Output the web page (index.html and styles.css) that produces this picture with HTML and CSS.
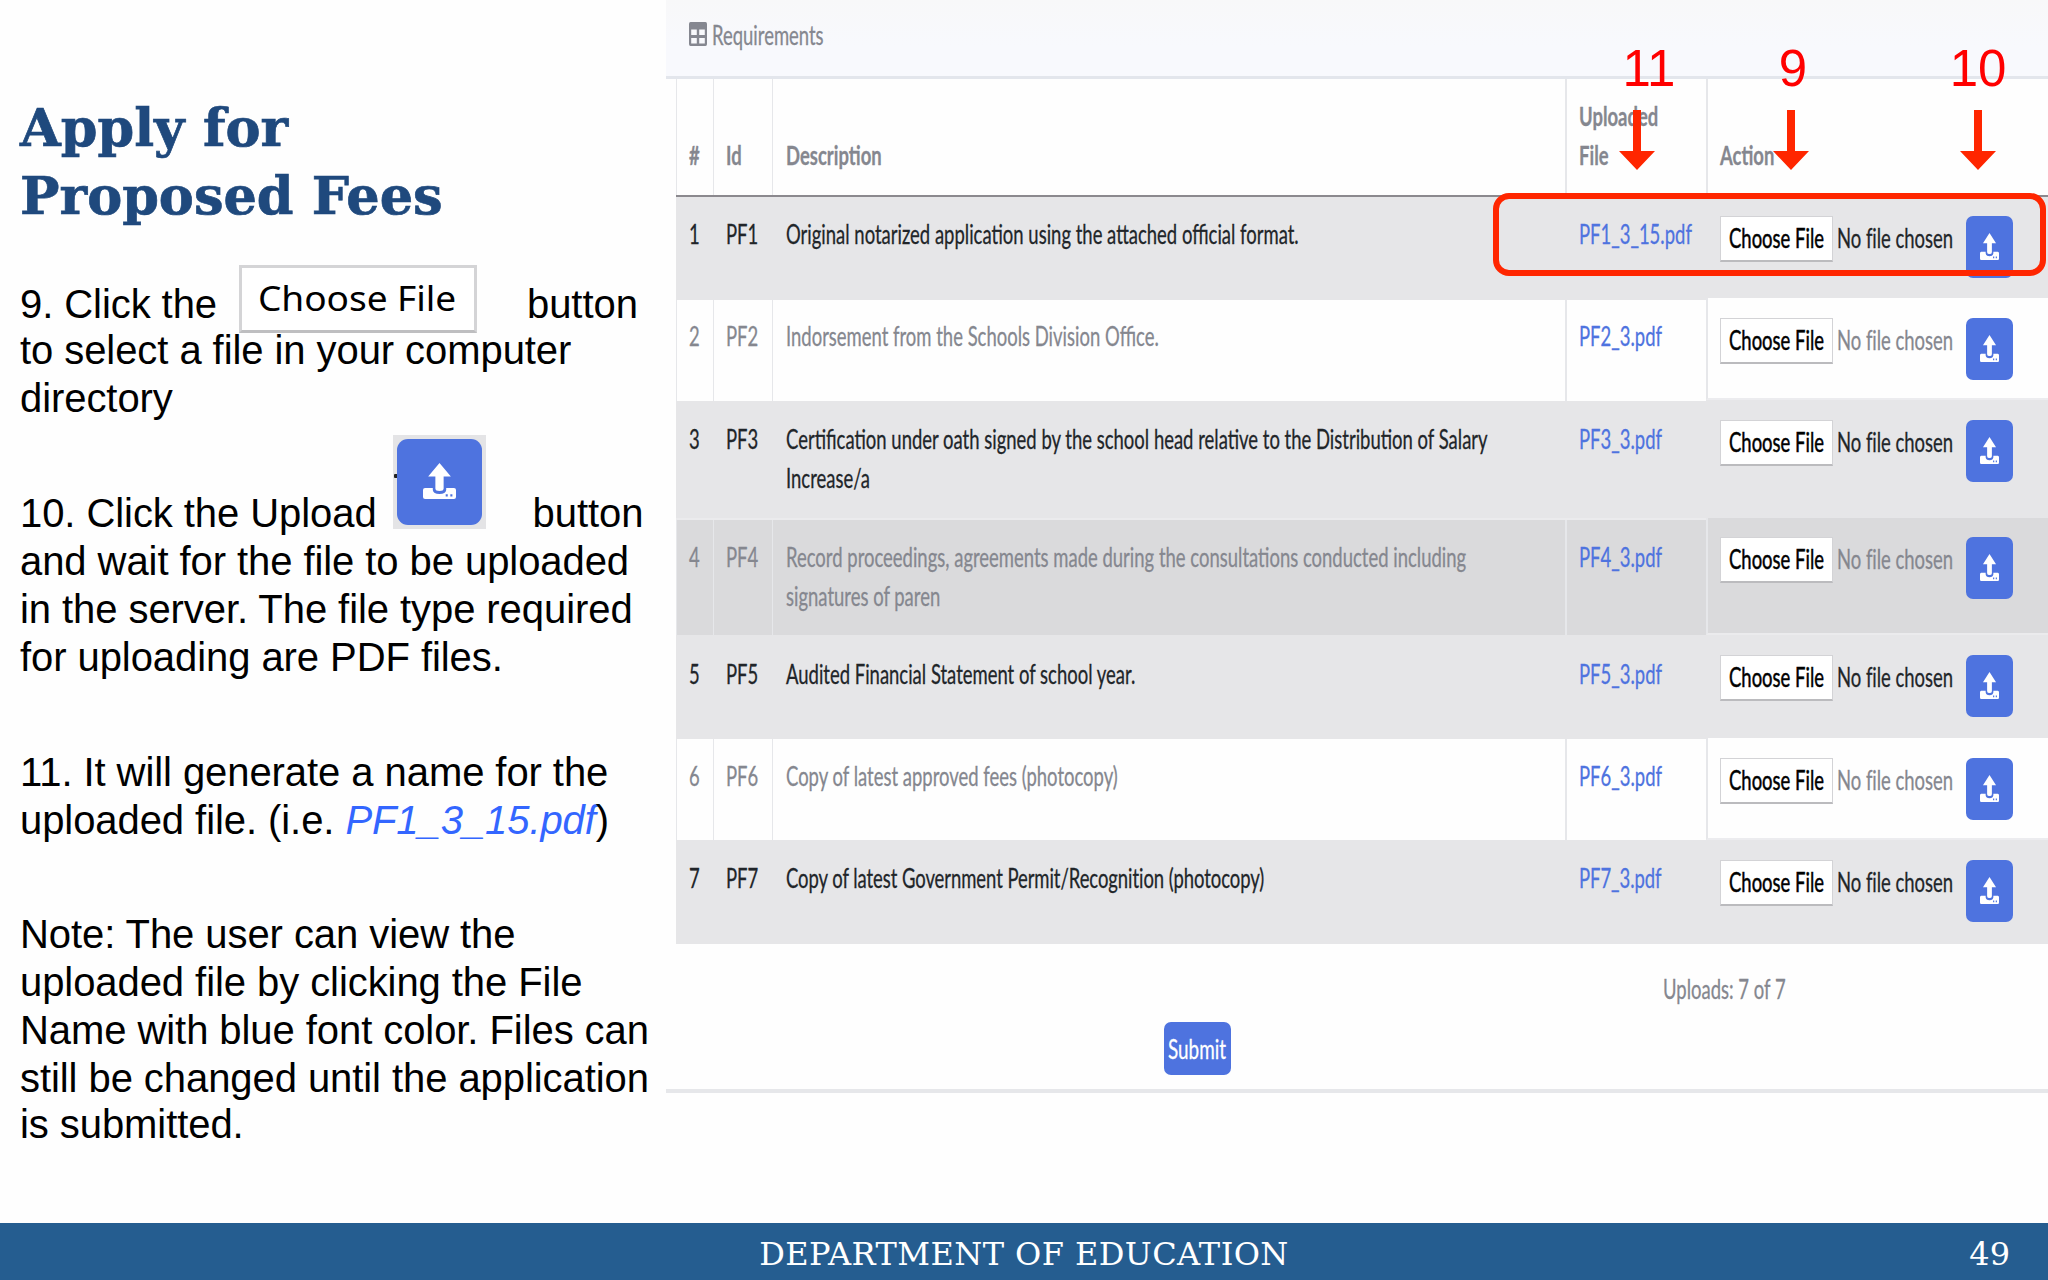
FILE: index.html
```html
<!DOCTYPE html>
<html lang="en">
<head>
<meta charset="utf-8">
<title>Apply for Proposed Fees</title>
<link rel="stylesheet" href="styles.css">
</head>
<body>
<svg width="0" height="0" class="defs">
  <symbol id="upload" viewBox="0 0 32 36" preserveAspectRatio="none">
    <path fill="#fff" d="M16 0 27 13.5H20V25.5Q20 28 16 28T12 25.5V13.5H5Z"/>
    <path fill="#fff" fill-rule="evenodd" d="M2 25H9.5V27Q10 31 16 31T22.500 27V25H30Q32 25 32 27V34Q32 36 30 36H2Q0 36 0 34V27Q0 25 2 25ZM22 31.300V33.500H24V31.300ZM26.500 31.300V33.500H28.500V31.300Z"/>
  </symbol>
</svg>
<div class="slide">
  <main class="content">
    <section class="guide">
      <h1 class="title">Apply for<br>Proposed Fees</h1>
      <div class="step first">
        <p class="line short">9. Click the<span class="choose-sample"><span>Choose File</span></span>button</p>
        <p class="line">to select a file in your computer</p>
        <p class="line">directory</p>
      </div>
      <div class="step second">
        <p class="line">10. Click the Upload<span class="upload-sample"><span class="tile"><svg><use href="#upload"/></svg></span></span>button</p>
        <p class="line">and wait for the file to be uploaded</p>
        <p class="line">in the server. The file type required</p>
        <p class="line">for uploading are PDF files.</p>
      </div>
      <div class="step third">
        <p class="line">11. It will generate a name for the</p>
        <p class="line">uploaded file. (i.e. <em>PF1_3_15.pdf</em>)</p>
      </div>
      <div class="step note">
        <p class="line">Note: The user can view the</p>
        <p class="line">uploaded file by clicking the File</p>
        <p class="line">Name with blue font color. Files can</p>
        <p class="line short">still be changed until the application</p>
        <p class="line">is submitted.</p>
      </div>
    </section>

    <section class="panel">
      <header class="panel-head">
        <svg class="table-icon" viewBox="0 0 18 24" preserveAspectRatio="none"><path fill="#858790" fill-rule="evenodd" d="M1.500 0H16.500Q18 0 18 2V22Q18 24 16.500 24H1.500Q0 24 0 22V2Q0 0 1.500 0ZM2.200 7.500V13H7.800V7.500ZM10.200 7.500V13H15.800V7.500ZM2.200 16V21.500H7.800V16ZM10.200 16V21.500H15.800V16Z"/></svg>
        <span class="t">Requirements</span>
      </header>
      <div class="tables">
        <div class="grid">
          <div class="row head"><div><b class="t">#</b></div><div><b class="t">Id</b></div><div><b class="t">Description</b></div><div><b class="t">Uploaded<br>File</b></div></div>
          <div class="row odd r1"><div><span class="t">1</span></div><div><span class="t">PF1</span></div><div><span class="t">Original notarized application using the attached official format.</span></div><div><a class="t">PF1_3_15.pdf</a></div></div>
          <div class="row r2"><div><span class="t">2</span></div><div><span class="t">PF2</span></div><div><span class="t">Indorsement from the Schools Division Office.</span></div><div><a class="t">PF2_3.pdf</a></div></div>
          <div class="row odd r3"><div><span class="t">3</span></div><div><span class="t">PF3</span></div><div><span class="t">Certification under oath signed by the school head relative to the Distribution of Salary<br>Increase/a</span></div><div><a class="t">PF3_3.pdf</a></div></div>
          <div class="row hover r4"><div><span class="t">4</span></div><div><span class="t">PF4</span></div><div><span class="t">Record proceedings, agreements made during the consultations conducted including<br>signatures of paren</span></div><div><a class="t">PF4_3.pdf</a></div></div>
          <div class="row odd r5"><div><span class="t">5</span></div><div><span class="t">PF5</span></div><div><span class="t">Audited Financial Statement of school year.</span></div><div><a class="t">PF5_3.pdf</a></div></div>
          <div class="row r6"><div><span class="t">6</span></div><div><span class="t">PF6</span></div><div><span class="t">Copy of latest approved fees (photocopy)</span></div><div><a class="t">PF6_3.pdf</a></div></div>
          <div class="row odd r7"><div><span class="t">7</span></div><div><span class="t">PF7</span></div><div><span class="t">Copy of latest Government Permit/Recognition (photocopy)</span></div><div><a class="t">PF7_3.pdf</a></div></div>
        </div>
        <div class="actions">
          <div class="act head"><b class="t">Action</b></div>
          <div class="act odd"><span class="file"><span class="t">Choose File</span></span><span class="none"><span class="t">No file chosen</span></span><span class="btn"><svg><use href="#upload"/></svg></span></div>
          <div class="act line-b"><span class="file"><span class="t">Choose File</span></span><span class="none"><span class="t">No file chosen</span></span><span class="btn"><svg><use href="#upload"/></svg></span></div>
          <div class="act odd low"><span class="file"><span class="t">Choose File</span></span><span class="none"><span class="t">No file chosen</span></span><span class="btn"><svg><use href="#upload"/></svg></span></div>
          <div class="act hover"><span class="file"><span class="t">Choose File</span></span><span class="none"><span class="t">No file chosen</span></span><span class="btn"><svg><use href="#upload"/></svg></span></div>
          <div class="act odd low"><span class="file"><span class="t">Choose File</span></span><span class="none"><span class="t">No file chosen</span></span><span class="btn"><svg><use href="#upload"/></svg></span></div>
          <div class="act line-b"><span class="file"><span class="t">Choose File</span></span><span class="none"><span class="t">No file chosen</span></span><span class="btn"><svg><use href="#upload"/></svg></span></div>
          <div class="act odd low"><span class="file"><span class="t">Choose File</span></span><span class="none"><span class="t">No file chosen</span></span><span class="btn"><svg><use href="#upload"/></svg></span></div>
        </div>
      </div>
      <div class="summary"><span class="t">Uploads: 7 of 7</span></div>
      <div class="submit-row"><span class="submit"><span class="t">Submit</span></span></div>
    </section>
  </main>

  <div class="mark m11"><span>11</span><svg viewBox="0 0 36 60"><path d="M14 0H22V41H36L18 60 0 41H14Z"/></svg></div>
  <div class="mark m9"><span>9</span><svg viewBox="0 0 36 60"><path d="M14 0H22V41H36L18 60 0 41H14Z"/></svg></div>
  <div class="mark m10"><span>10</span><svg viewBox="0 0 36 60"><path d="M14 0H22V41H36L18 60 0 41H14Z"/></svg></div>
  <div class="highlight"></div>

  <footer class="footer"><span></span><span class="dept">DEPARTMENT OF EDUCATION</span><span class="page">49</span></footer>
</div>
</body>
</html>
```
FILE: styles.css
```css
* { box-sizing: border-box; }
body { margin: 0; background: #fefefe; }
.defs { position: absolute; }
p, h1 { margin: 0; }

.slide {
  position: relative;
  width: 2048px;
  height: 1280px;
  overflow: hidden;
  display: flex;
  flex-direction: column;
}
.content { flex: 1; display: flex; align-items: flex-start; }

/* Instructions */
.guide {
  width: 666px;
  padding: 94px 0 0 20px;
  font: 40px/48px "Liberation Sans", Arial, sans-serif;
  letter-spacing: -.07px;
  color: #000;
}
.title {
  font: bold 52.5px/68px "DejaVu Serif", serif;
  letter-spacing: 0;
  -webkit-text-stroke: .7px #1f497d;
  color: #1f497d;
}
.line { height: 48px; white-space: nowrap; display: flex; }
.line.short { height: 46px; }
.line em { color: #3366ff; margin-left: 11px; }
.step.first { padding-top: 50px; }
.step.second { padding-top: 67px; }
.step.third { padding-top: 67px; }
.step.note { padding-top: 66px; }

.choose-sample {
  width: 238px;
  height: 68px;
  margin: -15px 50px 0 22px;
  border: 3px solid #d4d4d6;
  border-bottom-color: #bebec0;
  background: #fff;
  font: 35px/60px "Noto Sans", sans-serif;
  padding-left: 16px;
}
.choose-sample span { display: inline-block; transform: scaleX(1.06); transform-origin: left; }
.upload-sample {
  position: relative;
  width: 93px;
  height: 94px;
  margin: -54px 47px 0 16px;
  padding: 4px;
  background: #e4e4e6;
}
.upload-sample::before {
  content: "";
  position: absolute;
  left: 1px;
  top: 39px;
  width: 4px;
  height: 4px;
  border-radius: 1px;
  background: #222;
}
.tile {
  position: relative;
  display: flex;
  width: 85px;
  height: 86px;
  border-radius: 11px;
  background: #4e73df;
  align-items: center;
  justify-content: center;
}
.tile svg { width: 33px; height: 36px; margin-top: -2px; }

/* Requirements panel */
.panel {
  width: 1382px;
  height: 1093px;
  border-bottom: 4px solid #e6e7ea;
  font: 27px/39px Lato, "Noto Sans", sans-serif;
  color: #85878f;
}
.t {
  display: inline-block;
  white-space: nowrap;
  transform: scaleX(.684);
  transform-origin: left;
  -webkit-text-stroke: .3px;
}
.panel-head {
  display: flex;
  height: 79px;
  padding: 15px 0 0 23px;
  background: linear-gradient(#f8f8f9, #f8f9fd 60%);
  border-bottom: 3px solid #e3e6ec;
}
.table-icon { width: 18px; height: 24px; margin: 7px 5px 0 0; }

.tables { display: flex; padding-left: 10px; }
.grid {
  width: 1030px;
  display: grid;
  grid-template-rows: 118px 103px 101px 119px 115px 104px 101px 104px;
}
.row {
  display: grid;
  grid-template-columns: 37px 59px 793px 141px;
}
.row > div { border-left: 1px solid #e6e7ea; padding: 17px 0 0 12px; overflow: hidden; }
.row > div:nth-child(3) { padding-left: 13px; }
.row > div:last-child { border-left-width: 2px; padding-left: 12px; }
.row.head { border-bottom: 2px solid #8b898e; }
.row.head > div { display: flex; align-items: flex-end; padding-bottom: 21px; }
.row.odd, .act.odd { background: #e6e6e8; color: #212529; }
.row.odd > div { border-color: #e6e6e8; }
.row.hover, .act.hover { background: #dadadc; }
.row.r2 > div { padding-top: 16px; }
.row.r3 > div, .row.r7 > div { padding-top: 18px; }
.row.r5 > div { padding-top: 19px; }
.row.r3 { border-bottom: 2px solid #ebebed; }
.row.r7 .t { letter-spacing: -.08px; }
a.t { color: #4e73df; }

.actions {
  flex: 1;
  display: grid;
  grid-template-rows: 118px 101px 102px 118px 117px 103px 102px 104px;
}
.act {
  display: flex;
  align-items: flex-start;
  padding: 19px 0 0 12px;
  border-left: 2px solid #e6e7ea;
}
.act.odd { border-left-color: #e6e6e8; }
.act.low { padding-top: 20px; }
.act.head { border-bottom: 2px solid #8b898e; padding: 56px 0 0 12px; }
.act.line-b { border-bottom: 2px solid #ececef; padding-top: 20px; }
.act.hover { border-bottom: 2px solid #ebebed; }
.file {
  width: 113px;
  height: 46px;
  padding: 1px 0 0 8px;
  background: #fff;
  border: 1px solid #d3d3d6;
  border-bottom: 2px solid #bbbbbe;
  color: #000;
}
.none { width: 129px; padding: 2px 0 0 4px; }
.file .t, .none .t { width: 90px; }
.file .t { -webkit-text-stroke: .5px; }
.none .t { letter-spacing: -.05px; }
.btn {
  width: 47px;
  height: 62px;
  margin-left: 4px;
  border-radius: 7px;
  background: #4e73df;
  display: flex;
  align-items: center;
  justify-content: center;
}
.btn svg { width: 19px; height: 27px; margin-top: -2px; }

.summary { padding: 25px 0 0 997px; height: 78px; }
.submit-row { padding-left: 498px; }
.submit {
  display: block;
  width: 67px;
  height: 53px;
  padding: 7px 0 0 4px;
  border-radius: 7px;
  background: #4e73df;
  color: #fff;
}
.submit .t { width: 60px; transform: scaleX(.7); }

/* Annotations drawn over the panel */
.mark {
  position: absolute;
  top: 39px;
  width: 80px;
  font: 51px/60px "Liberation Sans", Arial, sans-serif;
  color: #ff0000;
  text-align: center;
}
.mark svg { display: block; width: 36px; height: 60px; margin: 11px auto 0; fill: #ff2600; }
.m11 { left: 1597px; }
.m11 span { position: relative; left: 12px; }
.m9 { left: 1751px; }
.m9 span { position: relative; left: 2px; }
.m10 { left: 1938px; }
.highlight {
  position: absolute;
  left: 1493px;
  top: 193px;
  width: 553px;
  height: 83px;
  border: 6px solid #ff2600;
  border-radius: 16px;
}

.footer {
  height: 57px;
  display: grid;
  grid-template-columns: 1fr auto 1fr;
  align-items: center;
  padding: 5px 38px 0;
  background: #255d90;
  color: #fff;
  font: 32px/40px "DejaVu Serif", serif;
}
.dept { letter-spacing: .42px; }
.page { text-align: right; }
```
